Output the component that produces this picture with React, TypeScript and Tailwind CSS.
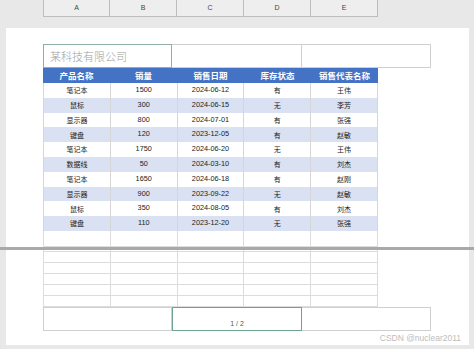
import React from "react";

const rows: [string, string, string, string, string][] = [
  ["笔记本", "1500", "2024-06-12", "有", "王伟"],
  ["鼠标", "300", "2024-06-15", "无", "李芳"],
  ["显示器", "800", "2024-07-01", "有", "张强"],
  ["键盘", "120", "2023-12-05", "有", "赵敏"],
  ["笔记本", "1750", "2024-06-20", "无", "王伟"],
  ["数据线", "50", "2024-03-10", "有", "刘杰"],
  ["笔记本", "1650", "2024-06-18", "有", "赵刚"],
  ["显示器", "900", "2023-09-22", "无", "赵敏"],
  ["鼠标", "350", "2024-08-05", "有", "刘杰"],
  ["键盘", "110", "2023-12-20", "无", "张强"],
];

const headers = ["产品名称", "销量", "销售日期", "库存状态", "销售代表名称"];
const letters = ["A", "B", "C", "D", "E"];

function GridRow({ h, top }: { h: string; top?: boolean }) {
  return (
    <div className={`flex ${h} ${top ? "border-t" : ""} border-b border-[#dcdcdc] border-l`}>
      {letters.map((l) => (
        <div key={l} className="w-[67px] h-full border-r border-[#dcdcdc]" />
      ))}
    </div>
  );
}

export default function App() {
  return (
    <div
      className="w-[474px] h-[349px] bg-[#e8e8e8] flex flex-col overflow-hidden"
      style={{ fontFamily: '"Liberation Sans", "Noto Sans CJK SC", sans-serif' }}
    >
      {/* column header strip */}
      <div className="h-[28px] shrink-0 pl-[43px]">
        <div className="flex h-[17px]">
          {letters.map((l, i) => (
            <div
              key={l}
              className={`w-[67px] h-full flex items-center justify-center text-[7px] text-[#444] bg-[#eeeeee] border-r border-b border-[#bdbdbd] ${i === 0 ? "border-l" : ""}`}
            >
              {l}
            </div>
          ))}
        </div>
      </div>

      {/* page 1 */}
      <div className="h-[219px] shrink-0 ml-[6px] w-[463px] bg-white pl-[37px] pt-[16px] flex flex-col">
        <div className="flex h-[24px]">
          <div className="w-[129px] h-full border border-[#8fb0a3] flex items-center pl-[6px] text-[11px] text-[#a0a0a0]" style={{ fontFamily: '"Noto Sans CJK SC", serif', fontWeight: 300 }}>
            某科技有限公司
          </div>
          <div className="w-[130px] h-full border-y border-r border-[#cfcfcf]" />
          <div className="w-[129px] h-full border-y border-r border-[#cfcfcf]" />
        </div>
        <div className="w-[335px]">
          <div className="flex h-[15px] bg-[#4472c4]">
            {headers.map((h) => (
              <div key={h} className="w-[67px] flex items-center justify-center text-white font-bold text-[8.5px]" style={{ fontFamily: '"Noto Sans CJK SC", sans-serif' }}>
                {h}
              </div>
            ))}
          </div>
          {rows.map((r, i) => (
            <div key={i} className={`flex h-[14.8px] border-l border-[#d6d6d6] ${i % 2 === 1 ? "bg-[#d9e1f2]" : "bg-white"}`}>
              {r.map((c, j) => (
                <div
                  key={j}
                  className="w-[67px] flex items-center justify-center text-[7.5px] text-[#222] border-r border-[#d6d6d6]"
                  style={j === 1 || j === 2 ? { fontFamily: '"Liberation Sans", sans-serif', fontSize: "7.3px" } : { fontFamily: '"Noto Sans CJK SC", sans-serif', fontSize: "7px" }}
                >
                  {c}
                </div>
              ))}
            </div>
          ))}
          <GridRow h="h-[16px]" />
        </div>
      </div>

      {/* page break */}
      <div className="h-[3px] shrink-0 bg-[#a9a9a9]" />

      {/* page 2 */}
      <div className="h-[95px] shrink-0 ml-[6px] w-[463px] bg-white pl-[37px] flex flex-col">
        <div className="w-[335px]">
          <div className="flex h-[1px] border-l border-[#dcdcdc]">
            {letters.map((l) => (
              <div key={l} className="w-[67px] h-full border-r border-[#dcdcdc]" />
            ))}
          </div>
          <GridRow h="h-[12px]" top />
          <GridRow h="h-[11px]" />
          <GridRow h="h-[11px]" />
          <GridRow h="h-[11px]" />
          <GridRow h="h-[11px]" />
        </div>
        <div className="flex h-[24px]">
          <div className="w-[129px] h-full border border-[#cfcfcf]" />
          <div className="w-[130px] h-full border border-[#6fa290] flex items-end justify-center pb-[1px] text-[7px] text-[#555]">
            1 / 2
          </div>
          <div className="w-[129px] h-full border-y border-r border-[#cfcfcf]" />
        </div>
        <div className="flex-1 flex items-center justify-end pr-[8px] text-[8.5px] text-[#bdbdbd]">
          CSDN @nuclear2011
        </div>
      </div>
    </div>
  );
}
